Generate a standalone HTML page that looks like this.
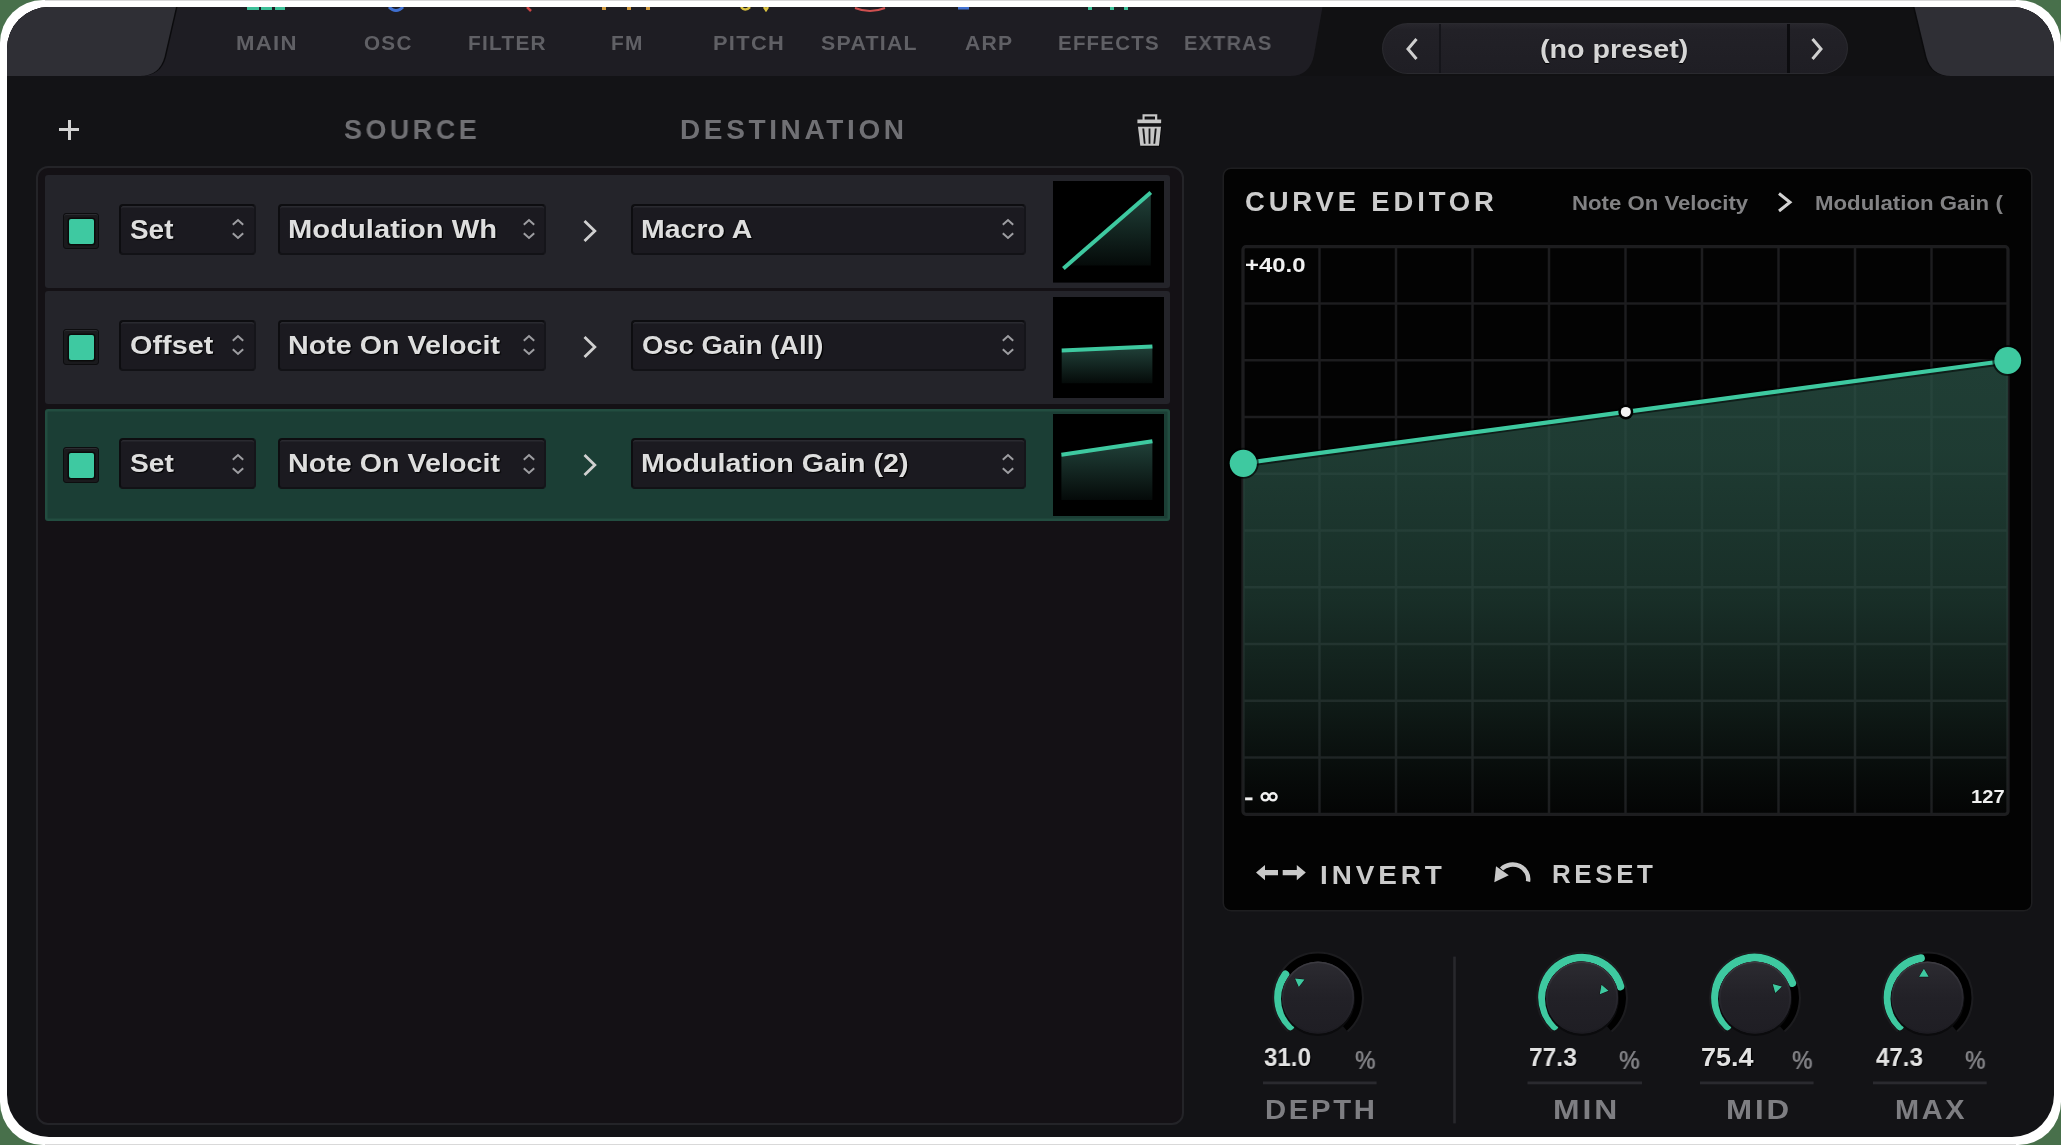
<!DOCTYPE html><html><head><meta charset="utf-8"><style>
*{margin:0;padding:0;box-sizing:border-box}
html,body{width:2061px;height:1145px;overflow:hidden}
body{background:#48704b;position:relative;font-family:"Liberation Sans",sans-serif}
.abs{position:absolute}
.tx{position:absolute;white-space:pre;font-weight:bold;line-height:1;transform-origin:0 0;will-change:transform}
.frame{position:absolute;left:0;top:0;width:2061px;height:1145px;border-radius:43px;background:#fff}
.app{position:absolute;left:7px;top:7px;width:2047px;height:1130px;border-radius:42px;background:#131316;overflow:hidden}
.row{position:absolute;left:44.5px;width:1125.5px;border-radius:3px}
.cb{position:absolute;left:63px;width:36px;height:36px;background:#1a1a1d;border:1.5px solid #0d0d0f;border-radius:3px;box-shadow:inset 0 1px 0 #2c2c31}
.cbi{position:absolute;left:68.6px;width:25px;height:25px;background:#3ec9a1;border-radius:2px;box-shadow:0 0 0 1.5px #0a0a0a}
.dd{position:absolute;background:#1b1a20;border-radius:4px;border:2px solid #0d0d10;border-right-color:#15151a;border-bottom-color:#121216;box-shadow:inset 0 1.5px 0 #2a2a30}
</style></head><body>
<div class="frame"></div>
<div class="abs" style="left:45px;top:0;width:1971px;height:1px;background:#d9d9d9"></div><div class="abs" style="left:45px;top:1144px;width:1971px;height:1px;background:#d9d9d9"></div>
<div class="app"><div style="position:absolute;left:-7px;top:-7px;width:2061px;height:1145px">
<svg class="abs" style="left:0;top:0" width="2061" height="90" viewBox="0 0 2061 90">
<rect x="1300" y="7" width="640" height="69" fill="#111113"/><path d="M100 7 L1322.5 7 L1314 55 Q1310 76 1290 76 L100 76 Z" fill="#1e1d23"/>
<path d="M0 7 L177.5 7 L166 57 Q161 76 141 76 L0 76 Z" fill="#0b0b0d"/>
<path d="M0 7 L176 7 L164.5 57 Q159.5 76 140 76 L0 76 Z" fill="#2f2f35"/>
<path d="M2061 7 L1913 7 L1925 57 Q1930 76 1950 76 L2061 76 Z" fill="#0b0b0d"/>
<path d="M2061 7 L1914.5 7 L1926.5 57 Q1931.5 76 1951 76 L2061 76 Z" fill="#2f2f35"/>
<!-- icon fragments -->
<g fill="#3cbf98"><rect x="247" y="7" width="12" height="3"/><rect x="261" y="7" width="11" height="3"/><rect x="275" y="7" width="10" height="3"/></g>
<path d="M389 7 Q396 14 403 7" fill="none" stroke="#3f6fd0" stroke-width="3"/>
<path d="M527 7 L531 11" stroke="#d04545" stroke-width="2.5"/>
<g fill="#d09a40"><rect x="602" y="7" width="4" height="3"/><rect x="627" y="7" width="4" height="3"/><rect x="646" y="7" width="4" height="3"/></g>
<path d="M741 7 Q745 12 750 7" fill="none" stroke="#d8c040" stroke-width="2.5"/><path d="M764 7 L766 10 L768 7" fill="none" stroke="#d8c040" stroke-width="2.5"/>
<path d="M855 8 Q870 14 885 8" fill="none" stroke="#d05050" stroke-width="2"/>
<rect x="958" y="7" width="11" height="2.5" fill="#4070d0"/>
<g fill="#3cbf98"><rect x="1088" y="7" width="4" height="3"/><rect x="1110" y="7" width="4" height="3"/><rect x="1124" y="7" width="4" height="3"/></g>
</svg>
<div class="abs" style="left:1382px;top:23px;width:466px;height:51px;border-radius:26px;background:#2a2a2f"></div>
<div class="abs" style="left:1383.2px;top:24.2px;width:463.6px;height:48.6px;border-radius:25px;background:linear-gradient(#28272d,#222127 12%,#1f1e24);"></div>
<div class="abs" style="left:1439px;top:24px;width:2px;height:49px;background:#15151a"></div>
<div class="abs" style="left:1786.5px;top:24px;width:3px;height:49px;background:#0c0c0f"></div>
<svg class="abs" style="left:1398px;top:34px" width="30" height="30" viewBox="0 0 30 30"><path d="M18.5 5 L10 15 L18.5 25" fill="none" stroke="#cfcfcf" stroke-width="3"/></svg>
<svg class="abs" style="left:1802px;top:34px" width="30" height="30" viewBox="0 0 30 30"><path d="M10.5 5 L19 15 L10.5 25" fill="none" stroke="#cfcfcf" stroke-width="3"/></svg>
<div class="abs" style="left:59px;top:128px;width:20px;height:3px;background:#d2d2d2"></div><div class="abs" style="left:67.5px;top:119.5px;width:3px;height:20px;background:#d2d2d2"></div>
<svg class="abs" style="left:1130px;top:108px" width="40" height="44" viewBox="1130 108 40 44">
<g fill="#000" opacity="0.7" transform="translate(0.8 1)">
<path d="M1142.5 114.2 H1157.3 V119.4 H1161.2 V123.3 H1137.4 V119.4 H1142.5 Z M1144.6 116.6 V119.4 H1155 V116.6 Z"/>
<path d="M1138 126.8 H1161 L1159 145.8 H1140.3 Z"/></g>
<path d="M1142.5 114.2 H1157.3 V119.4 H1161.2 V123.3 H1137.4 V119.4 H1142.5 Z M1144.6 116.6 V119.4 H1155 V116.6 Z" fill="#c6c6c6"/>
<path d="M1138 126.8 H1161 L1159 145.8 H1140.3 Z" fill="#c6c6c6"/>
<g fill="#151517"><path d="M1142.3 128.5 L1144.2 128.5 L1145.6 143.8 L1143.8 143.8 Z"/><path d="M1148.6 128.5 H1150.4 V143.8 H1148.6 Z"/><path d="M1154.8 128.5 L1156.7 128.5 L1155.2 143.8 L1153.4 143.8 Z"/></g>
</svg>
<div class="abs" style="left:35.5px;top:165.5px;width:1148.5px;height:959px;border-radius:12px;border:2.8px solid #242428;background:#141115"></div>
<div class="row" style="top:174.5px;height:113.5px;background:#24242a"></div><div class="cb" style="top:212.5px"></div><div class="cbi" style="top:218.5px"></div><div class="dd" style="left:119.2px;top:203.5px;width:137.1px;height:51.0px"></div>
<svg class="abs" style="left:230.3px;top:216.0px" width="16" height="26" viewBox="0 0 16 26"><path d="M2.8 8.8 L8 4 L13.2 8.8 M2.8 17.2 L8 22 L13.2 17.2" fill="none" stroke="#9d9da1" stroke-width="2"/></svg><div class="dd" style="left:277.7px;top:203.5px;width:268.8px;height:51.0px"></div>
<svg class="abs" style="left:520.5px;top:216.0px" width="16" height="26" viewBox="0 0 16 26"><path d="M2.8 8.8 L8 4 L13.2 8.8 M2.8 17.2 L8 22 L13.2 17.2" fill="none" stroke="#9d9da1" stroke-width="2"/></svg><div class="dd" style="left:630.8px;top:203.5px;width:395.5px;height:51.0px"></div>
<svg class="abs" style="left:1000.3px;top:216.0px" width="16" height="26" viewBox="0 0 16 26"><path d="M2.8 8.8 L8 4 L13.2 8.8 M2.8 17.2 L8 22 L13.2 17.2" fill="none" stroke="#9d9da1" stroke-width="2"/></svg><svg class="abs" style="left:578px;top:216.5px" width="24" height="28" viewBox="0 0 24 28"><path d="M6.5 4 L16.8 14 L6.5 24" fill="none" stroke="#d0d0d0" stroke-width="2.8" stroke-linejoin="miter"/></svg>
<div class="row" style="top:290.5px;height:113.69999999999999px;background:#24242a"></div><div class="cb" style="top:328.5px"></div><div class="cbi" style="top:334.5px"></div><div class="dd" style="left:119.2px;top:319.5px;width:137.1px;height:51.0px"></div>
<svg class="abs" style="left:230.3px;top:332.0px" width="16" height="26" viewBox="0 0 16 26"><path d="M2.8 8.8 L8 4 L13.2 8.8 M2.8 17.2 L8 22 L13.2 17.2" fill="none" stroke="#9d9da1" stroke-width="2"/></svg><div class="dd" style="left:277.7px;top:319.5px;width:268.8px;height:51.0px"></div>
<svg class="abs" style="left:520.5px;top:332.0px" width="16" height="26" viewBox="0 0 16 26"><path d="M2.8 8.8 L8 4 L13.2 8.8 M2.8 17.2 L8 22 L13.2 17.2" fill="none" stroke="#9d9da1" stroke-width="2"/></svg><div class="dd" style="left:630.8px;top:319.5px;width:395.5px;height:51.0px"></div>
<svg class="abs" style="left:1000.3px;top:332.0px" width="16" height="26" viewBox="0 0 16 26"><path d="M2.8 8.8 L8 4 L13.2 8.8 M2.8 17.2 L8 22 L13.2 17.2" fill="none" stroke="#9d9da1" stroke-width="2"/></svg><svg class="abs" style="left:578px;top:332.5px" width="24" height="28" viewBox="0 0 24 28"><path d="M6.5 4 L16.8 14 L6.5 24" fill="none" stroke="#d0d0d0" stroke-width="2.8" stroke-linejoin="miter"/></svg>
<div class="row" style="top:409px;height:112.39999999999998px;background:#1b3e35;box-shadow:inset 0 0 0 2.5px rgba(60,130,105,0.22)"></div><div class="cb" style="top:447.0px"></div><div class="cbi" style="top:453.0px"></div><div class="dd" style="left:119.2px;top:438.0px;width:137.1px;height:51.0px"></div>
<svg class="abs" style="left:230.3px;top:450.5px" width="16" height="26" viewBox="0 0 16 26"><path d="M2.8 8.8 L8 4 L13.2 8.8 M2.8 17.2 L8 22 L13.2 17.2" fill="none" stroke="#9d9da1" stroke-width="2"/></svg><div class="dd" style="left:277.7px;top:438.0px;width:268.8px;height:51.0px"></div>
<svg class="abs" style="left:520.5px;top:450.5px" width="16" height="26" viewBox="0 0 16 26"><path d="M2.8 8.8 L8 4 L13.2 8.8 M2.8 17.2 L8 22 L13.2 17.2" fill="none" stroke="#9d9da1" stroke-width="2"/></svg><div class="dd" style="left:630.8px;top:438.0px;width:395.5px;height:51.0px"></div>
<svg class="abs" style="left:1000.3px;top:450.5px" width="16" height="26" viewBox="0 0 16 26"><path d="M2.8 8.8 L8 4 L13.2 8.8 M2.8 17.2 L8 22 L13.2 17.2" fill="none" stroke="#9d9da1" stroke-width="2"/></svg><svg class="abs" style="left:578px;top:451.0px" width="24" height="28" viewBox="0 0 24 28"><path d="M6.5 4 L16.8 14 L6.5 24" fill="none" stroke="#d0d0d0" stroke-width="2.8" stroke-linejoin="miter"/></svg>
<svg class="abs" style="left:1052.6px;top:181.4px" width="111.8" height="101.6" viewBox="0 0 111.8 101.6">
<defs><linearGradient id="tg181" x1="0" y1="11.6" x2="0" y2="84.6" gradientUnits="userSpaceOnUse"><stop offset="0" stop-color="#21423a"/><stop offset="1" stop-color="#050a09"/></linearGradient></defs>
<rect width="111.8" height="101.6" fill="#000"/>
<path d="M10.4 87.4 L97.8 11.6 L97.8 84.6 L10.4 84.6 Z" fill="url(#tg181)"/>
<path d="M10.4 87.4 L97.8 11.6" stroke="#3ec9a0" stroke-width="4" stroke-linecap="butt"/>
</svg>
<svg class="abs" style="left:1052.6px;top:297px" width="111.8" height="101.0" viewBox="0 0 111.8 101.0">
<defs><linearGradient id="tg297" x1="0" y1="49.5" x2="0" y2="86.3" gradientUnits="userSpaceOnUse"><stop offset="0" stop-color="#21423a"/><stop offset="1" stop-color="#050a09"/></linearGradient></defs>
<rect width="111.8" height="101.0" fill="#000"/>
<path d="M8.7 53.4 L99.4 49.5 L99.4 86.3 L8.7 86.3 Z" fill="url(#tg297)"/>
<path d="M8.7 53.4 L99.4 49.5" stroke="#3ec9a0" stroke-width="4" stroke-linecap="butt"/>
</svg>
<svg class="abs" style="left:1052.6px;top:414px" width="111.8" height="102.0" viewBox="0 0 111.8 102.0">
<defs><linearGradient id="tg414" x1="0" y1="27.2" x2="0" y2="86.0" gradientUnits="userSpaceOnUse"><stop offset="0" stop-color="#21423a"/><stop offset="1" stop-color="#050a09"/></linearGradient></defs>
<rect width="111.8" height="102.0" fill="#000"/>
<path d="M8.4 40.8 L99.4 27.2 L99.4 86.0 L8.4 86.0 Z" fill="url(#tg414)"/>
<path d="M8.4 40.8 L99.4 27.2" stroke="#3ec9a0" stroke-width="4" stroke-linecap="butt"/>
</svg>
<div class="abs" style="left:1223.5px;top:169.2px;width:807px;height:741px;border-radius:7px;background:#030303;box-shadow:0 0 0 1.5px #1e1e20"></div>
<svg class="abs" style="left:0;top:0" width="2061" height="1145" viewBox="0 0 2061 1145">
<defs><linearGradient id="cg" x1="0" y1="360" x2="0" y2="814" gradientUnits="userSpaceOnUse">
<stop offset="0" stop-color="rgb(41,81,69)" stop-opacity="0.76"/>
<stop offset="0.2" stop-color="rgb(41,81,69)" stop-opacity="0.72"/>
<stop offset="0.53" stop-color="rgb(41,80,68)" stop-opacity="0.56"/>
<stop offset="0.75" stop-color="rgb(41,78,66)" stop-opacity="0.33"/>
<stop offset="0.93" stop-color="rgb(41,75,64)" stop-opacity="0.1"/>
<stop offset="1" stop-color="rgb(41,75,64)" stop-opacity="0.02"/></linearGradient></defs>
<g stroke="#1d1d1f" stroke-width="2.5"><line x1="1319.50" y1="246.7" x2="1319.50" y2="814.3"/><line x1="1396.00" y1="246.7" x2="1396.00" y2="814.3"/><line x1="1472.50" y1="246.7" x2="1472.50" y2="814.3"/><line x1="1549.00" y1="246.7" x2="1549.00" y2="814.3"/><line x1="1625.50" y1="246.7" x2="1625.50" y2="814.3"/><line x1="1702.00" y1="246.7" x2="1702.00" y2="814.3"/><line x1="1778.50" y1="246.7" x2="1778.50" y2="814.3"/><line x1="1855.00" y1="246.7" x2="1855.00" y2="814.3"/><line x1="1931.50" y1="246.7" x2="1931.50" y2="814.3"/><line x1="1243.0" y1="303.46" x2="2008.0" y2="303.46"/><line x1="1243.0" y1="360.22" x2="2008.0" y2="360.22"/><line x1="1243.0" y1="416.98" x2="2008.0" y2="416.98"/><line x1="1243.0" y1="473.74" x2="2008.0" y2="473.74"/><line x1="1243.0" y1="530.50" x2="2008.0" y2="530.50"/><line x1="1243.0" y1="587.26" x2="2008.0" y2="587.26"/><line x1="1243.0" y1="644.02" x2="2008.0" y2="644.02"/><line x1="1243.0" y1="700.78" x2="2008.0" y2="700.78"/><line x1="1243.0" y1="757.54" x2="2008.0" y2="757.54"/><rect x="1243.0" y="246.7" width="765.0" height="567.5999999999999" rx="3" fill="none" stroke-width="3.3"/></g>
<path d="M1243.3 463.3 L1625.8 411.9 L2007.8 360.5 L2007.8 814.3 L1243.3 814.3 Z" fill="url(#cg)"/>
<path d="M1243.3 463.3 L1625.8 411.9 L2007.8 360.5" fill="none" stroke="#000" stroke-width="8" opacity="0.5"/>
<path d="M1243.3 463.3 L1625.8 411.9 L2007.8 360.5" fill="none" stroke="#3ec9a0" stroke-width="4.2"/>
<circle cx="1243.3" cy="463.3" r="15.5" fill="#000" opacity="0.6"/>
<circle cx="1243.3" cy="463.3" r="13.6" fill="#3ec9a0"/>
<circle cx="2007.8" cy="360.5" r="15.5" fill="#000" opacity="0.6"/>
<circle cx="2007.8" cy="360.5" r="13.4" fill="#3ec9a0"/>
<circle cx="1625.8" cy="411.9" r="7.5" fill="#000"/>
<circle cx="1625.8" cy="411.9" r="5" fill="#f4f4f4"/>
<path d="M1779 193.5 L1790 202.3 L1779 211" fill="none" stroke="#d2d2d2" stroke-width="3"/>
<rect x="1245.1" y="797.4" width="7.4" height="2.9" fill="#f0f0f0"/>
<circle cx="1265.2" cy="796.8" r="3.6" fill="none" stroke="#f0f0f0" stroke-width="2.4"/>
<circle cx="1273" cy="796.8" r="3.6" fill="none" stroke="#f0f0f0" stroke-width="2.4"/>
</svg>
<svg class="abs" style="left:1250px;top:858px" width="60" height="30" viewBox="1250 858 60 30">
<path d="M1256 872.6 L1265 865 V870 H1278 V875.2 H1265 V880.2 Z" fill="#cacaca"/>
<path d="M1305.8 872.6 L1296.8 865 V870 H1282.7 V875.2 H1296.8 V880.2 Z" fill="#cacaca"/>
</svg>
<svg class="abs" style="left:1488px;top:855px" width="50" height="34" viewBox="1488 855 50 34">
<path d="M1528 881.5 A15.5 14.5 0 0 0 1501.5 869" fill="none" stroke="#cacaca" stroke-width="4.4"/>
<path d="M1494.3 882.2 L1496 866.2 L1508.8 875.2 Z" fill="#cacaca"/>
</svg>
<svg class="abs" style="left:0;top:0" width="2061" height="1145" viewBox="0 0 2061 1145">
<defs><linearGradient id="kb" x1="0" y1="0" x2="0" y2="1"><stop offset="0" stop-color="#2c2b31"/><stop offset="0.5" stop-color="#222127"/><stop offset="1" stop-color="#1f1e24"/></linearGradient><linearGradient id="kr" x1="0" y1="0" x2="0" y2="1"><stop offset="0" stop-color="#3c3b41"/><stop offset="0.45" stop-color="#2a2930"/><stop offset="1" stop-color="#1c1b21"/></linearGradient></defs>
<path d="M1291.76 1027.69 A40.0 40.0 0 1 1 1344.24 1027.69" fill="none" stroke="#1c1c1f" stroke-width="12.0"/><path d="M1292.28 1027.08 A39.2 39.2 0 1 1 1343.72 1027.08" fill="none" stroke="#000" stroke-width="9.5"/>
<path d="M1290.28 1026.20 A39.900000000000006 39.900000000000006 0 0 1 1285.39 974.51" fill="none" stroke="#3ec9a0" stroke-width="7.9" stroke-linecap="round"/>
<circle cx="1318" cy="999.0" r="37" fill="#0b0b0d"/>
<circle cx="1318" cy="997.5" r="36" fill="url(#kb)"/><circle cx="1318" cy="997.5" r="35.2" fill="none" stroke="url(#kr)" stroke-width="1.6"/>
<path d="M0 -4.8 L4.8 3.2 L-4.8 3.2 Z" fill="#3ec9a0" stroke="#0a0a0a" stroke-width="0.8" paint-order="stroke" transform="translate(1299.40 982.20) rotate(187)"/><path d="M1555.76 1027.69 A40.0 40.0 0 1 1 1608.24 1027.69" fill="none" stroke="#1c1c1f" stroke-width="12.0"/><path d="M1556.28 1027.08 A39.2 39.2 0 1 1 1607.72 1027.08" fill="none" stroke="#000" stroke-width="9.5"/>
<path d="M1554.28 1026.20 A39.900000000000006 39.900000000000006 0 1 1 1620.33 986.43" fill="none" stroke="#3ec9a0" stroke-width="7.9" stroke-linecap="round"/>
<circle cx="1582" cy="999.0" r="37" fill="#0b0b0d"/>
<circle cx="1582" cy="997.5" r="36" fill="url(#kb)"/><circle cx="1582" cy="997.5" r="35.2" fill="none" stroke="url(#kr)" stroke-width="1.6"/>
<path d="M0 -4.8 L4.8 3.2 L-4.8 3.2 Z" fill="#3ec9a0" stroke="#0a0a0a" stroke-width="0.8" paint-order="stroke" transform="translate(1603.80 990.00) rotate(100)"/><path d="M1728.76 1027.69 A40.0 40.0 0 1 1 1781.24 1027.69" fill="none" stroke="#1c1c1f" stroke-width="12.0"/><path d="M1729.28 1027.08 A39.2 39.2 0 1 1 1780.72 1027.08" fill="none" stroke="#000" stroke-width="9.5"/>
<path d="M1727.28 1026.20 A39.900000000000006 39.900000000000006 0 1 1 1792.15 982.95" fill="none" stroke="#3ec9a0" stroke-width="7.9" stroke-linecap="round"/>
<circle cx="1755" cy="999.0" r="37" fill="#0b0b0d"/>
<circle cx="1755" cy="997.5" r="36" fill="url(#kb)"/><circle cx="1755" cy="997.5" r="35.2" fill="none" stroke="url(#kr)" stroke-width="1.6"/>
<path d="M0 -4.8 L4.8 3.2 L-4.8 3.2 Z" fill="#3ec9a0" stroke="#0a0a0a" stroke-width="0.8" paint-order="stroke" transform="translate(1776.50 988.40) rotate(195)"/><path d="M1901.26 1027.69 A40.0 40.0 0 1 1 1953.74 1027.69" fill="none" stroke="#1c1c1f" stroke-width="12.0"/><path d="M1901.78 1027.08 A39.2 39.2 0 1 1 1953.22 1027.08" fill="none" stroke="#000" stroke-width="9.5"/>
<path d="M1899.78 1026.20 A39.900000000000006 39.900000000000006 0 0 1 1920.91 958.15" fill="none" stroke="#3ec9a0" stroke-width="7.9" stroke-linecap="round"/>
<circle cx="1927.5" cy="999.0" r="37" fill="#0b0b0d"/>
<circle cx="1927.5" cy="997.5" r="36" fill="url(#kb)"/><circle cx="1927.5" cy="997.5" r="35.2" fill="none" stroke="url(#kr)" stroke-width="1.6"/>
<path d="M0 -4.8 L4.8 3.2 L-4.8 3.2 Z" fill="#3ec9a0" stroke="#0a0a0a" stroke-width="0.8" paint-order="stroke" transform="translate(1923.90 973.60) rotate(0)"/><rect x="1263" y="1081.5" width="113.6" height="2.8" fill="#2a2a2f"/><rect x="1527.5" y="1081.5" width="114.5" height="2.8" fill="#2a2a2f"/><rect x="1700" y="1081.5" width="113.6" height="2.8" fill="#2a2a2f"/><rect x="1873" y="1081.5" width="113.7" height="2.8" fill="#2a2a2f"/>
<rect x="1453.2" y="956.6" width="2.6" height="166.8" fill="#28282c"/>
</svg>
<div class="tx" style="left:235.91px;top:33.14px;font-size:20.349px;letter-spacing:0.060em;color:#606065;transform:scaleX(1.0889);">MAIN</div>
<div class="tx" style="left:364.18px;top:33.14px;font-size:20.349px;letter-spacing:0.060em;color:#606065;transform:scaleX(1.0178);">OSC</div>
<div class="tx" style="left:467.68px;top:33.14px;font-size:20.349px;letter-spacing:0.060em;color:#606065;transform:scaleX(1.0243);">FILTER</div>
<div class="tx" style="left:610.77px;top:33.14px;font-size:20.349px;letter-spacing:0.060em;color:#606065;transform:scaleX(1.0276);">FM</div>
<div class="tx" style="left:713.23px;top:33.14px;font-size:20.349px;letter-spacing:0.060em;color:#606065;transform:scaleX(1.0734);">PITCH</div>
<div class="tx" style="left:820.65px;top:33.14px;font-size:20.349px;letter-spacing:0.060em;color:#606065;transform:scaleX(1.0478);">SPATIAL</div>
<div class="tx" style="left:965.16px;top:33.14px;font-size:20.349px;letter-spacing:0.060em;color:#606065;transform:scaleX(1.0409);">ARP</div>
<div class="tx" style="left:1058.29px;top:33.14px;font-size:20.349px;letter-spacing:0.060em;color:#606065;transform:scaleX(1.0071);">EFFECTS</div>
<div class="tx" style="left:1184.31px;top:33.14px;font-size:20.349px;letter-spacing:0.060em;color:#606065;transform:scaleX(0.9851);">EXTRAS</div>
<div class="tx" style="left:1539.57px;top:37.13px;font-size:25.436px;letter-spacing:0.000em;color:#d6d6d6;transform:scaleX(1.1287);text-shadow:0 1px 1px #000;">(no preset)</div>
<div class="tx" style="left:343.73px;top:116.28px;font-size:27.616px;letter-spacing:0.130em;color:#707074;transform:scaleX(0.9746);">SOURCE</div>
<div class="tx" style="left:680.27px;top:115.88px;font-size:27.616px;letter-spacing:0.130em;color:#707074;transform:scaleX(1.0138);">DESTINATION</div>
<div class="tx" style="left:130.36px;top:216.70px;font-size:26.890px;letter-spacing:0.000em;color:#dedede;transform:scaleX(1.0390);text-shadow:1px 1px 1px #000;">Set</div>
<div class="tx" style="left:288.14px;top:217.46px;font-size:25.872px;letter-spacing:0.000em;color:#dedede;transform:scaleX(1.1286);text-shadow:1px 1px 1px #000;">Modulation Wh</div>
<div class="tx" style="left:641.49px;top:217.46px;font-size:25.872px;letter-spacing:0.000em;color:#dedede;transform:scaleX(1.1030);text-shadow:1px 1px 1px #000;">Macro A</div>
<div class="tx" style="left:130.28px;top:333.16px;font-size:25.872px;letter-spacing:0.000em;color:#dedede;transform:scaleX(1.1162);text-shadow:1px 1px 1px #000;">Offset</div>
<div class="tx" style="left:288.18px;top:333.16px;font-size:25.872px;letter-spacing:0.000em;color:#dedede;transform:scaleX(1.1090);text-shadow:1px 1px 1px #000;">Note On Velocit</div>
<div class="tx" style="left:642.34px;top:333.16px;font-size:25.872px;letter-spacing:0.000em;color:#dedede;transform:scaleX(1.0615);text-shadow:1px 1px 1px #000;">Osc Gain (All)</div>
<div class="tx" style="left:130.31px;top:451.16px;font-size:25.872px;letter-spacing:0.000em;color:#dedede;transform:scaleX(1.0923);text-shadow:1px 1px 1px #000;">Set</div>
<div class="tx" style="left:288.18px;top:451.16px;font-size:25.872px;letter-spacing:0.000em;color:#dedede;transform:scaleX(1.1090);text-shadow:1px 1px 1px #000;">Note On Velocit</div>
<div class="tx" style="left:641.18px;top:451.16px;font-size:25.872px;letter-spacing:0.000em;color:#dedede;transform:scaleX(1.1088);text-shadow:1px 1px 1px #000;">Modulation Gain (2)</div>
<div class="tx" style="left:1244.89px;top:188.15px;font-size:27.180px;letter-spacing:0.140em;color:#cdcdcd;transform:scaleX(1.0106);">CURVE EDITOR</div>
<div class="tx" style="left:1572.31px;top:193.44px;font-size:20.349px;letter-spacing:0.000em;color:#828284;transform:scaleX(1.0907);">Note On Velocity</div>
<div class="tx" style="left:1815.31px;top:193.44px;font-size:20.349px;letter-spacing:0.000em;color:#828284;transform:scaleX(1.0941);">Modulation Gain (</div>
<div class="tx" style="left:1244.66px;top:255.61px;font-size:19.331px;letter-spacing:0.000em;color:#f0f0f0;transform:scaleX(1.2362);">+40.0</div>
<div class="tx" style="left:1970.93px;top:787.68px;font-size:18.895px;letter-spacing:0.000em;color:#f0f0f0;transform:scaleX(1.0667);">127</div>
<div class="tx" style="left:1320.29px;top:861.77px;font-size:26.453px;letter-spacing:0.140em;color:#cbcbcb;transform:scaleX(1.0549);">INVERT</div>
<div class="tx" style="left:1551.67px;top:862.31px;font-size:25.581px;letter-spacing:0.140em;color:#cbcbcb;transform:scaleX(1.0133);">RESET</div>
<div class="tx" style="left:1263.85px;top:1044.95px;font-size:25.291px;letter-spacing:0.000em;color:#e2e2e2;transform:scaleX(0.9542);text-shadow:1px 1px 1px #000;">31.0</div>
<div class="tx" style="left:1354.60px;top:1047.65px;font-size:25.291px;letter-spacing:0.000em;color:#7f7f83;transform:scaleX(0.9182);">%</div>
<div class="tx" style="left:1265.31px;top:1096.92px;font-size:26.744px;letter-spacing:0.090em;color:#7e7e82;transform:scaleX(1.0959);">DEPTH</div>
<div class="tx" style="left:1529.33px;top:1044.95px;font-size:25.291px;letter-spacing:0.000em;color:#e2e2e2;transform:scaleX(0.9729);text-shadow:1px 1px 1px #000;">77.3</div>
<div class="tx" style="left:1619.00px;top:1047.65px;font-size:25.291px;letter-spacing:0.000em;color:#7f7f83;transform:scaleX(0.9273);">%</div>
<div class="tx" style="left:1552.62px;top:1096.92px;font-size:26.744px;letter-spacing:0.090em;color:#7e7e82;transform:scaleX(1.1920);">MIN</div>
<div class="tx" style="left:1700.63px;top:1044.95px;font-size:25.291px;letter-spacing:0.000em;color:#e2e2e2;transform:scaleX(1.0687);text-shadow:1px 1px 1px #000;">75.4</div>
<div class="tx" style="left:1791.60px;top:1047.65px;font-size:25.291px;letter-spacing:0.000em;color:#7f7f83;transform:scaleX(0.9182);">%</div>
<div class="tx" style="left:1725.96px;top:1096.92px;font-size:26.744px;letter-spacing:0.090em;color:#7e7e82;transform:scaleX(1.1706);">MID</div>
<div class="tx" style="left:1875.80px;top:1044.95px;font-size:25.291px;letter-spacing:0.000em;color:#e2e2e2;transform:scaleX(0.9531);text-shadow:1px 1px 1px #000;">47.3</div>
<div class="tx" style="left:1964.70px;top:1047.65px;font-size:25.291px;letter-spacing:0.000em;color:#7f7f83;transform:scaleX(0.9182);">%</div>
<div class="tx" style="left:1894.64px;top:1096.92px;font-size:26.744px;letter-spacing:0.090em;color:#7e7e82;transform:scaleX(1.0806);">MAX</div>
</div></div></body></html>
